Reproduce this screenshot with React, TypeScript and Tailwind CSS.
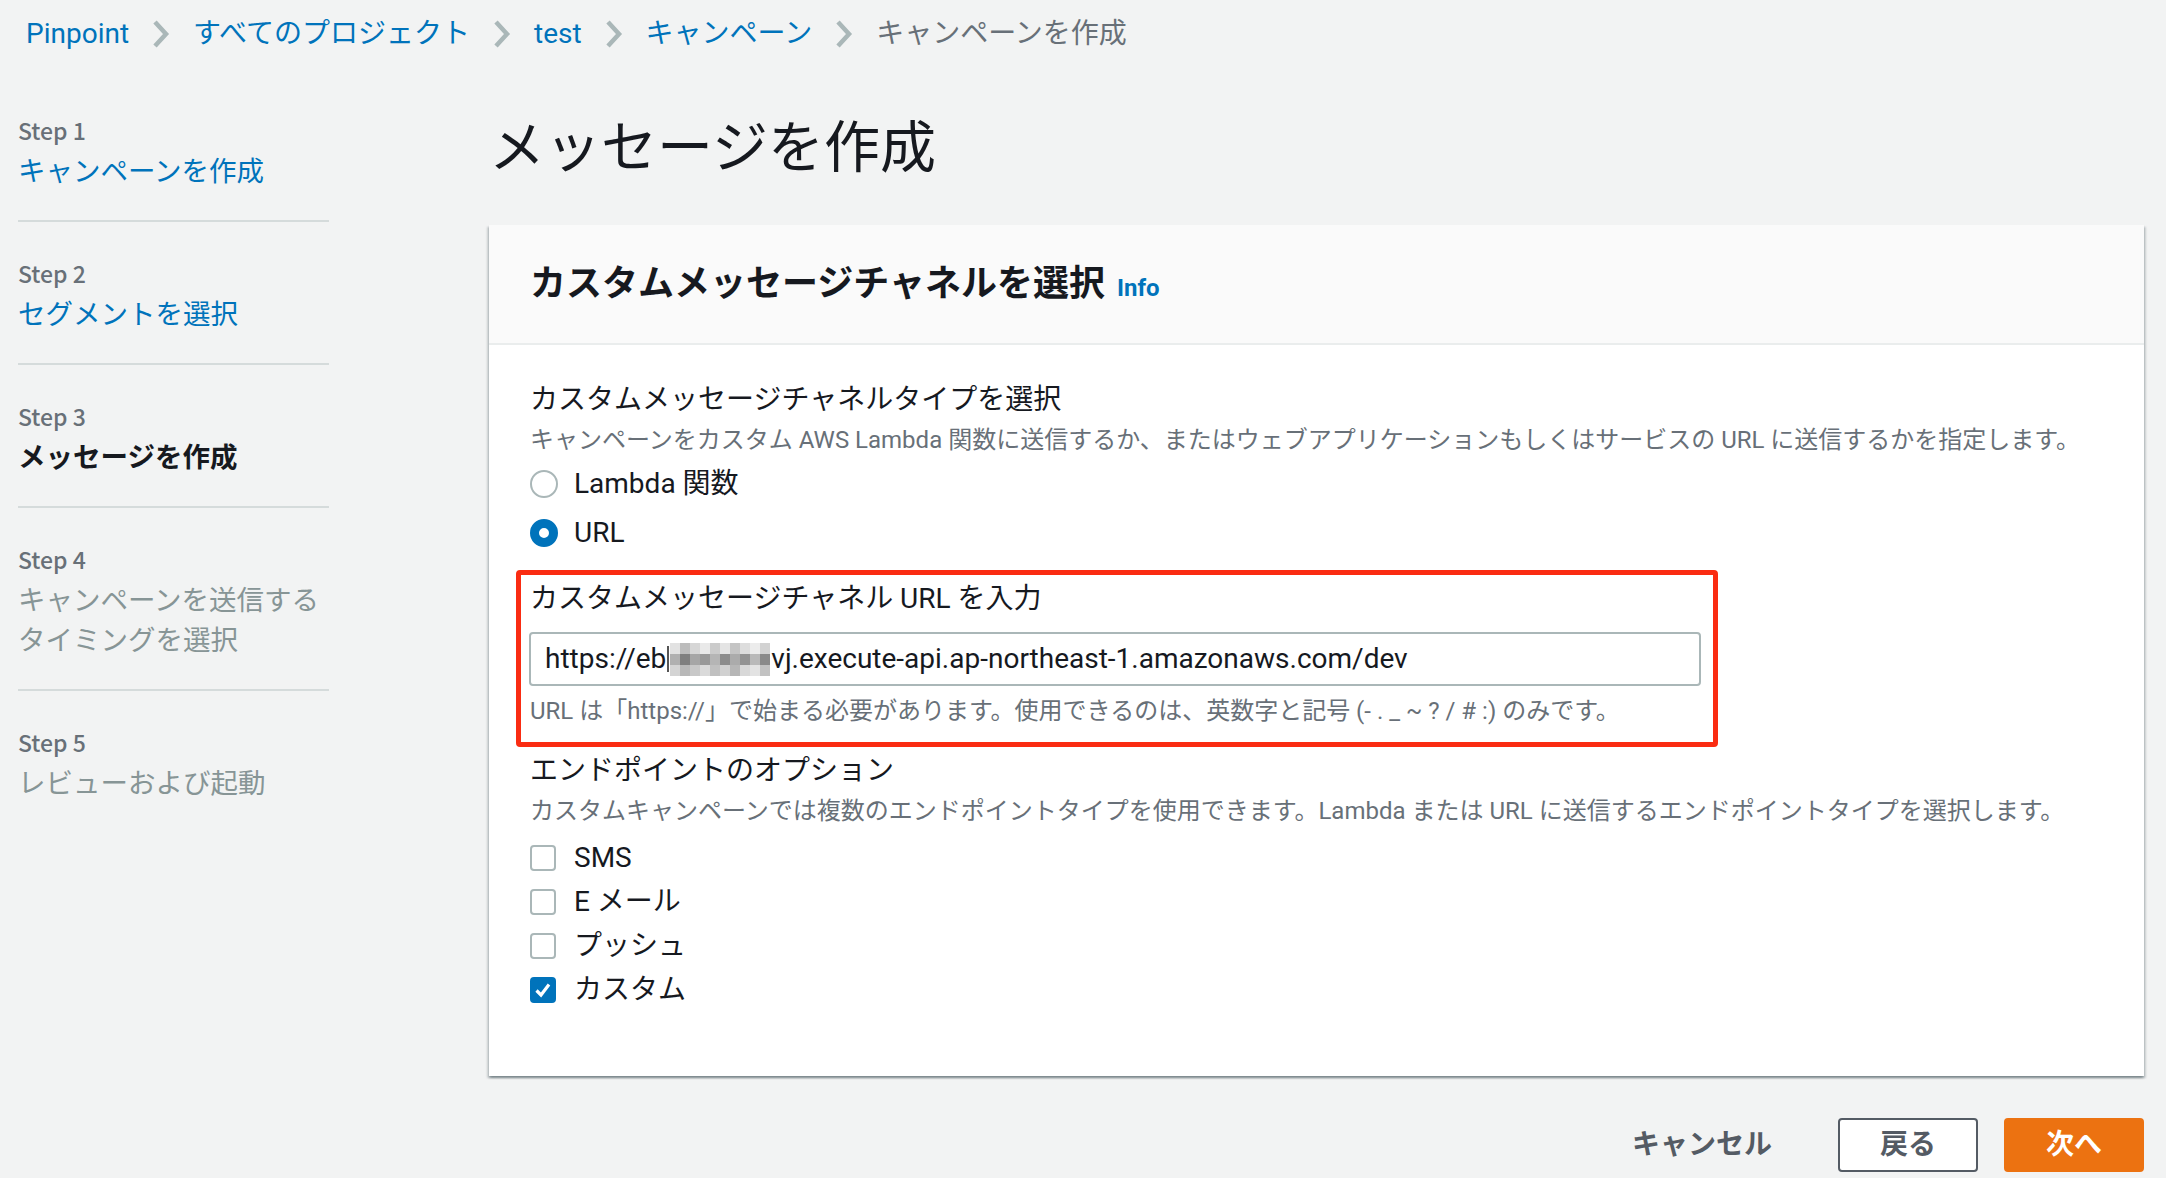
import React from 'react';

const FONT_MAIN = "font-['Roboto','Noto_Sans_CJK_JP',sans-serif]";

type Step = { label: string; lines: string[]; state: 'done' | 'current' | 'todo' };

const STEPS: Step[] = [
  { label: 'Step 1', lines: ['キャンペーンを作成'], state: 'done' },
  { label: 'Step 2', lines: ['セグメントを選択'], state: 'done' },
  { label: 'Step 3', lines: ['メッセージを作成'], state: 'current' },
  { label: 'Step 4', lines: ['キャンペーンを送信する', 'タイミングを選択'], state: 'todo' },
  { label: 'Step 5', lines: ['レビューおよび起動'], state: 'todo' },
];

// mosaic blur over the hidden part of the URL
const MOSAIC = [
  ['#e2e2e2', '#bcbcbc', '#d6d6d6', '#e9e9e9', '#cbcbcb', '#e4e4e4', '#c4c4c4', '#dddddd', '#ececec', '#d2d2d2'],
  ['#b0b0b0', '#7f7f7f', '#a6a6a6', '#999999', '#b5b5b5', '#8c8c8c', '#ababab', '#939393', '#b9b9b9', '#8a8a8a'],
  ['#d4d4d4', '#b8b8b8', '#c8c8c8', '#dadada', '#c0c0c0', '#d1d1d1', '#b6b6b6', '#d8d8d8', '#e3e3e3', '#c2c2c2'],
];

function Chevron() {
  return (
    <svg width="18" height="30" viewBox="0 0 18 30" className="shrink-0">
      <polyline points="3,3 14,15 3,27" fill="none" stroke="#aab7b8" strokeWidth="4.5" />
    </svg>
  );
}

function Breadcrumbs() {
  const links = ['Pinpoint', 'すべてのプロジェクト', 'test', 'キャンペーン'];
  return (
    <nav className="flex items-center gap-[23px] pl-[26px] pt-[14px] h-[54px] text-[28px] leading-[40px]">
      {links.map((l) => (
        <React.Fragment key={l}>
          <span className="text-[#0073bb]">{l}</span>
          <Chevron />
        </React.Fragment>
      ))}
      <span className="text-[#687078]">キャンペーンを作成</span>
    </nav>
  );
}

function Sidebar() {
  return (
    <aside className="ml-[18px] w-[311px] shrink-0 pt-[60px] font-['Noto_Sans_CJK_JP',sans-serif]">
      {STEPS.map((s, i) => (
        <div
          key={s.label}
          className={`${i === 0 ? '' : 'pt-[35px]'} ${i < STEPS.length - 1 ? 'pb-[31px] border-b-2 border-[#d5dbdb]' : ''}`}
        >
          <div className="text-[23px] leading-[32px] text-[#687078] font-medium">{s.label}</div>
          <div
            className={`mt-[3px] text-[27.5px] leading-[40px] ${
              s.state === 'done'
                ? 'text-[#0073bb]'
                : s.state === 'current'
                  ? 'text-[#16191f] font-bold'
                  : 'text-[#879596]'
            }`}
          >
            {s.lines.map((l) => (
              <div key={l}>{l}</div>
            ))}
          </div>
        </div>
      ))}
    </aside>
  );
}

function Radio({ checked, label }: { checked?: boolean; label: string }) {
  return (
    <div className="flex items-center h-[49px] gap-[16px]">
      <span
        className={`w-[28px] h-[28px] rounded-full bg-white ${
          checked ? 'border-[9px] border-[#0073bb]' : 'border-2 border-[#aab7b8]'
        }`}
      />
      <span className="text-[28px] leading-[40px] text-[#16191f]">{label}</span>
    </div>
  );
}

function Checkbox({ checked, label }: { checked?: boolean; label: string }) {
  return (
    <div className="flex items-center h-[44px] gap-[18px]">
      <span
        className={`w-[26px] h-[26px] rounded-[4px] flex items-center justify-center ${
          checked ? 'bg-[#0073bb] border-2 border-[#0073bb]' : 'bg-white border-2 border-[#aab7b8]'
        }`}
      >
        {checked && (
          <svg width="20" height="20" viewBox="0 0 20 20">
            <polyline points="3.5,10.5 8,15 16,4.5" fill="none" stroke="#fff" strokeWidth="3.2" />
          </svg>
        )}
      </span>
      <span className="text-[28px] leading-[40px] text-[#16191f]">{label}</span>
    </div>
  );
}

function Blurred() {
  return (
    <span className="inline-flex items-center h-[33px] mx-[1px]">
      <span className="w-[2px] h-[26px] bg-[#555] mr-[1px]" />
      <span className="flex flex-col">
        {MOSAIC.map((row, r) => (
          <span key={r} className="flex">
            {row.map((c, i) => (
              <span key={i} className="w-[10px] h-[11px]" style={{ backgroundColor: c }} />
            ))}
          </span>
        ))}
      </span>
    </span>
  );
}

function Panel() {
  return (
    <section className="mt-[42px] bg-white shadow-[0_2px_2px_0_rgba(0,28,36,0.3),2px_2px_2px_0_rgba(0,28,36,0.15),-2px_2px_2px_0_rgba(0,28,36,0.15)]">
      <header className="bg-[#fafafa] border-b-2 border-[#eaeded] px-[41px] pt-[35px] pb-[35px] flex items-baseline">
        <h2 className="text-[36px] leading-[48px] font-bold text-[#16191f]">カスタムメッセージチャネルを選択</h2>
        <span className="ml-[12px] text-[24px] font-bold text-[#0073bb]">Info</span>
      </header>
      <div className="pl-[41px] pr-[41px] pt-[35px] pb-[64px]">
        <div className="text-[28px] leading-[40px] text-[#16191f]">カスタムメッセージチャネルタイプを選択</div>
        <div className="mt-[3px] text-[24px] leading-[34px] text-[#687078]">
          キャンペーンをカスタム AWS Lambda 関数に送信するか、またはウェブアプリケーションもしくはサービスの URL に送信するかを指定します。
        </div>
        <div className="mt-[2px]">
          <Radio label="Lambda 関数" />
          <Radio checked label="URL" />
        </div>

        <div className="mt-[13px] -ml-[14px] w-[1202px] border-[5px] border-[#fa2c12] rounded-[4px] pl-[8px] pr-[12px] pt-[4px] pb-[14px]">
          <div className="pl-[1px] text-[28px] leading-[40px] text-[#16191f]">カスタムメッセージチャネル URL を入力</div>
          <div className="mt-[13px] h-[54px] border-2 border-[#aab7b8] rounded-[4px] bg-white flex items-center px-[14px] text-[28px] text-[#16191f] whitespace-nowrap">
            <span>https://eb</span>
            <Blurred />
            <span>vj.execute-api.ap-northeast-1.amazonaws.com/dev</span>
          </div>
          <div className="mt-[8px] pl-[1px] text-[24px] leading-[34px] text-[#687078]">
            URL は「https://」で始まる必要があります。使用できるのは、英数字と記号 (- . _ ~ ? / # :) のみです。
          </div>
        </div>

        <div className="mt-[4px] text-[28px] leading-[40px] text-[#16191f]">エンドポイントのオプション</div>
        <div className="mt-[3px] text-[24px] leading-[34px] text-[#687078]">
          カスタムキャンペーンでは複数のエンドポイントタイプを使用できます。Lambda または URL に送信するエンドポイントタイプを選択します。
        </div>
        <div className="mt-[8px]">
          <Checkbox label="SMS" />
          <Checkbox label="E メール" />
          <Checkbox label="プッシュ" />
          <Checkbox checked label="カスタム" />
        </div>
      </div>
    </section>
  );
}

export default function App() {
  return (
    <div className={`min-h-screen w-[2166px] bg-[#f2f3f3] ${FONT_MAIN}`}>
      <Breadcrumbs />
      <div className="flex">
        <Sidebar />
        <main className="ml-[160px] flex-1 pr-[22px]">
          <h1 className="mt-[59px] text-[56px] leading-[70px] font-normal text-[#16191f]">メッセージを作成</h1>
          <Panel />
          <div className="mt-[42px] flex justify-end items-center gap-[26px]">
            <button className="h-[54px] px-[40px] text-[28px] font-bold text-[#545b64]">キャンセル</button>
            <button className="h-[54px] px-[40px] text-[28px] font-bold text-[#545b64] bg-white border-2 border-[#545b64] rounded-[4px]">
              戻る
            </button>
            <button className="h-[54px] px-[40px] text-[28px] font-bold text-white bg-[#ec7211] border-2 border-[#ec7211] rounded-[4px]">
              次へ
            </button>
          </div>
        </main>
      </div>
    </div>
  );
}
